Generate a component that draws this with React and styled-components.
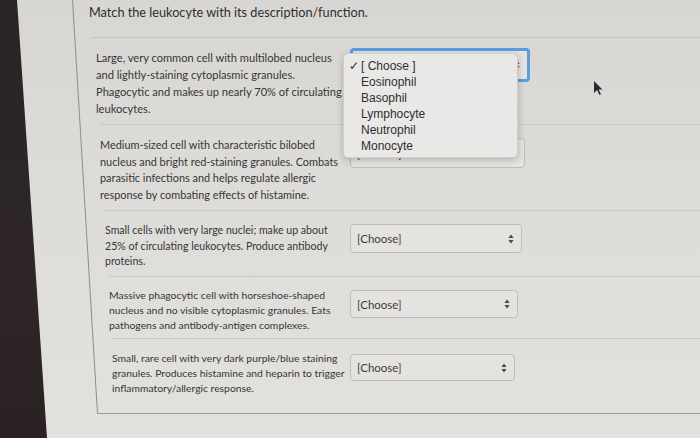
import styled, { createGlobalStyle } from "styled-components";

const GlobalStyle = createGlobalStyle`
  *, *::before, *::after { box-sizing: border-box; }
  html, body { margin: 0; padding: 0; }
  body { width: 700px; height: 438px; overflow: hidden; background: #dcdad7; }
`;

const Screen = styled.div`
  position: relative;
  display: flex;
  width: 700px;
  height: 438px;
  overflow: hidden;
  background: linear-gradient(180deg, #d8d6d2 0%, #dedcd9 45%, #e2e1de 100%);
  font-family: Lato, "Open Sans", sans-serif;
`;

const Bezel = styled.div`
  flex: 0 0 47px;
  background: linear-gradient(180deg, #2a2426 0%, #2e2628 65%, #2a2122 100%);
  clip-path: polygon(0 0, 17px 0, 47px 100%, 0 100%);
`;

const Page = styled.div`
  flex: 1;
  display: flex;
  flex-direction: column;
  min-width: 0;
`;

const Title = styled.h1`
  margin: 0;
  height: 37px;
  padding: 4px 0 0 42px;
  font-size: 12.7px;
  font-weight: 400;
  line-height: 16px;
  color: #2e2e2e;
`;

const Rule = styled.div`
  height: 1px;
  margin-left: 44px;
  background: #c4c3c0;
`;

const Panel = styled.div`
  position: relative;
  display: flex;
  flex-direction: column;
  margin-left: 27px;

  &::before {
    content: "";
    position: absolute;
    left: -2px;
    top: -38px;
    bottom: 0;
    width: 1px;
    background: #8e8d8b;
    transform-origin: top left;
    transform: skewX(3.46deg);
  }

  &::after {
    content: "";
    position: absolute;
    left: 23px;
    right: 0;
    bottom: 0;
    height: 1px;
    background: #9c9b99;
  }
`;

const Row = styled.div`
  display: flex;
  align-items: flex-start;
  height: ${(p) => p.$h}px;
  margin-left: ${(p) => p.$inset}px;
  border-top: ${(p) => (p.$first ? "none" : "1px solid #c9c8c5")};
`;

const Desc = styled.p`
  flex: 0 0 ${(p) => 276 - p.$inset}px;
  min-width: 0;
  margin: 0;
  padding-top: ${(p) => p.$top}px;
  font-size: ${(p) => p.$size}px;
  line-height: ${(p) => p.$lh}px;
  color: #363636;
  white-space: nowrap;
`;

const SelectWrap = styled.div`
  position: relative;
  flex: none;
  margin-top: ${(p) => p.$top}px;
`;

const Select = styled.div`
  display: flex;
  align-items: center;
  justify-content: space-between;
  width: ${(p) => p.$w}px;
  height: ${(p) => p.$h}px;
  padding: 0 7px 0 ${(p) => (p.$focus ? 4 : 6)}px;
  background: #e4e3e0;
  border: ${(p) => (p.$focus ? "3px solid #5d9be2" : "1px solid #bebdba")};
  border-radius: 4px;
  font-size: 11.5px;
  color: #3c3c3c;
`;

const Arrows = () => (
  <svg width="6" height="10" viewBox="0 0 6 10">
    <path d="M3 0.5 L5.6 4 H0.4 Z M3 9.5 L5.6 6 H0.4 Z" fill="#4a4a4a" />
  </svg>
);

const Menu = styled.ul`
  position: absolute;
  left: -7px;
  top: 5px;
  width: 175px;
  margin: 0;
  padding: 4px 0 3px;
  list-style: none;
  background: #e9e8e6;
  border: 1px solid #cfcecb;
  border-radius: 5px;
  box-shadow: 0 2px 7px rgba(0, 0, 0, 0.22);
  font-family: "Liberation Sans", Arial, sans-serif;
  font-size: 12px;
  color: #2f2f2f;
  z-index: 2;
`;

const Item = styled.li`
  position: relative;
  height: 16px;
  line-height: 16px;
  padding-left: 17px;
`;

const Check = styled.span`
  position: absolute;
  left: 5px;
  top: 0;
`;

const Cursor = styled.svg`
  position: absolute;
  left: 593px;
  top: 80px;
  filter: blur(0.4px);
`;

const options = ["Eosinophil", "Basophil", "Lymphocyte", "Neutrophil", "Monocyte"];

const rows = [
  {
    h: 86, inset: 22, top: 11, lh: 17, size: 11.1, st: 10, sw: 180, sh: 34, focus: true,
    lines: [
      "Large, very common cell with multilobed nucleus",
      "and lightly-staining cytoplasmic granules.",
      "Phagocytic and makes up nearly 70% of circulating",
      "leukocytes.",
    ],
  },
  {
    h: 86, inset: 26, top: 12, lh: 16.5, size: 10.9, st: 13, sw: 175, sh: 30,
    lines: [
      "Medium-sized cell with characteristic bilobed",
      "nucleus and bright red-staining granules. Combats",
      "parasitic infections and helps regulate allergic",
      "response by combating effects of histamine.",
    ],
  },
  {
    h: 66, inset: 31, top: 12, lh: 15.5, size: 10.6, st: 13, sw: 172, sh: 29,
    lines: [
      "Small cells with very large nuclei; make up about",
      "25% of circulating leukocytes. Produce antibody",
      "proteins.",
    ],
  },
  {
    h: 62, inset: 35, top: 11, lh: 15, size: 10.4, st: 13, sw: 168, sh: 28,
    lines: [
      "Massive phagocytic cell with horseshoe-shaped",
      "nucleus and no visible cytoplasmic granules. Eats",
      "pathogens and antibody-antigen complexes.",
    ],
  },
  {
    h: 76, inset: 38, top: 12, lh: 15, size: 10.35, st: 15, sw: 165, sh: 27,
    lines: [
      "Small, rare cell with very dark purple/blue staining",
      "granules. Produces histamine and heparin to trigger",
      "inflammatory/allergic response.",
    ],
  },
];

export default function App() {
  return (
    <>
      <GlobalStyle />
      <Screen>
        <Bezel />
        <Page>
          <Title>Match the leukocyte with its description/function.</Title>
          <Rule />
          <Panel>
            {rows.map((r, i) => (
              <Row key={i} $h={r.h} $inset={r.inset} $first={i === 0}>
                <Desc $inset={r.inset} $top={r.top} $lh={r.lh} $size={r.size}>
                  {r.lines.map((l, j) => (
                    <span key={j}>
                      {l}
                      <br />
                    </span>
                  ))}
                </Desc>
                <SelectWrap $top={r.st}>
                  <Select $w={r.sw} $h={r.sh} $focus={r.focus}>
                    <span>{r.focus ? "" : "[Choose]"}</span>
                    <Arrows />
                  </Select>
                  {r.focus && (
                    <Menu>
                      <Item>
                        <Check>✓</Check>[ Choose ]
                      </Item>
                      {options.map((o) => (
                        <Item key={o}>{o}</Item>
                      ))}
                    </Menu>
                  )}
                </SelectWrap>
              </Row>
            ))}
          </Panel>
        </Page>
        <Cursor width="10" height="16" viewBox="0 0 10 16">
          <path d="M1 1 L1 13 L4 10 L6.5 15 L8 14.3 L5.6 9.5 L9.5 9.5 Z" fill="#2a2a30" />
        </Cursor>
      </Screen>
    </>
  );
}
